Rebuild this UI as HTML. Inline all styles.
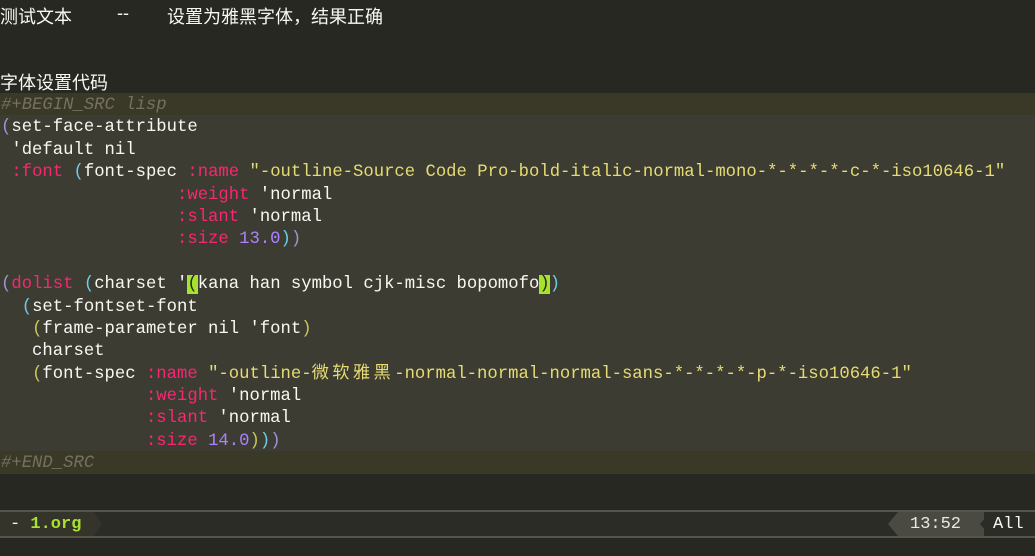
<!DOCTYPE html>
<html><head><meta charset="utf-8"><style>
html,body{margin:0;padding:0;background:#272822;width:1035px;height:556px;overflow:hidden;}
.hdr{position:absolute;left:0;font-family:"Liberation Sans","Noto Sans CJK SC",sans-serif;font-size:18px;color:#f8f8f2;white-space:pre;}
.code{position:absolute;left:0;top:93px;width:1035px;font-family:"Liberation Mono","Noto Sans CJK SC",monospace;font-size:17.25px;color:#f8f8f2;}
.l{height:22.4px;line-height:25px;white-space:pre;padding-left:1px;overflow:hidden;}
.blk{background:#3c3c32;}
.be{background:#3a3827;color:#75715e;font-style:italic;}
.k{color:#f92672}.s{color:#e6db74}.n{color:#ae81ff}
.p1{color:#9d94d6}.p2{color:#6ccde6}.p3{color:#c5c85a}
.hl{background:#a6e22e;color:#272822}
.cj{letter-spacing:3.4px}
.ml{position:absolute;left:0;top:510px;width:1035px;height:24px;background:#2c2c26;border-top:2px solid #55554c;border-bottom:2px solid #55554c;font-family:"Liberation Mono",monospace;font-size:17px;line-height:25px;}
</style></head><body>
<div class="hdr" style="top:3px">测试文本</div>
<div class="hdr" style="top:3px;left:117px">--</div>
<div class="hdr" style="top:3px;left:167px">设置为雅黑字体，结果正确</div>
<div class="hdr" style="top:69px">字体设置代码</div>
<div class="code">
<div class="l be">#+BEGIN_SRC lisp</div>
<div class="blk">
<div class="l"><span class="p1">(</span>set-face-attribute</div>
<div class="l"> 'default nil</div>
<div class="l"> <span class="k">:font</span> <span class="p2">(</span>font-spec <span class="k">:name</span> <span class="s">"-outline-Source Code Pro-bold-italic-normal-mono-*-*-*-*-c-*-iso10646-1"</span></div>
<div class="l">                 <span class="k">:weight</span> 'normal</div>
<div class="l">                 <span class="k">:slant</span> 'normal</div>
<div class="l">                 <span class="k">:size</span> <span class="n">13.0</span><span class="p2">)</span><span class="p1">)</span></div>
<div class="l"> </div>
<div class="l"><span class="p1">(</span><span class="k">dolist</span> <span class="p2">(</span>charset '<span class="hl">(</span>kana han symbol cjk-misc bopomof<span>o</span><span class="hl">)</span><span class="p2">)</span></div>
<div class="l">  <span class="p2">(</span>set-fontset-font</div>
<div class="l">   <span class="p3">(</span>frame-parameter nil 'font<span class="p3">)</span></div>
<div class="l">   charset</div>
<div class="l">   <span class="p3">(</span>font-spec <span class="k">:name</span> <span class="s">"-outline-<span class="cj">微软雅黑</span>-normal-normal-normal-sans-*-*-*-*-p-*-iso10646-1"</span></div>
<div class="l">              <span class="k">:weight</span> 'normal</div>
<div class="l">              <span class="k">:slant</span> 'normal</div>
<div class="l">              <span class="k">:size</span> <span class="n">14.0</span><span class="p3">)</span><span class="p2">)</span><span class="p1">)</span></div>
</div>
<div class="l be">#+END_SRC</div>
</div>
<div class="ml">
<div style="position:absolute;left:0;top:0;height:24px;width:102px;background:#34342b;clip-path:polygon(0 0,94px 0,100% 50%,94px 100%,0 100%);"></div>
<div style="position:absolute;left:10px;top:0;color:#f8f8f2;">- <b style="color:#a6e22e">1.org</b></div>
<div style="position:absolute;left:888px;top:0;height:24px;width:96px;background:#4a4a42;clip-path:polygon(10px 0,100% 0,100% 100%,10px 100%,0 50%);"></div>
<div style="position:absolute;left:910px;top:0;color:#e8e8e2;">13:52</div>
<div style="position:absolute;left:980px;top:0;height:24px;width:55px;background:#2c2c26;clip-path:polygon(10px 0,100% 0,100% 100%,10px 100%,0 50%);"></div>
<div style="position:absolute;left:993px;top:0;color:#f8f8f2;">All</div>
</div>
</body></html>
